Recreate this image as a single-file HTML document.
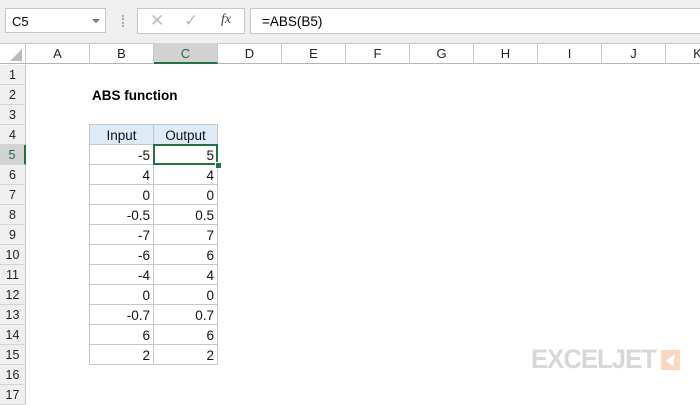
<!DOCTYPE html><html><head><style>
body{margin:0;width:700px;height:400px;overflow:hidden;background:#fff;font-family:"Liberation Sans",sans-serif;position:relative}
.a{position:absolute}
.ch{position:absolute;top:43px;height:21px;border-right:1px solid #c8c8c8;box-sizing:border-box;text-align:center;font-size:13px;line-height:21px;color:#222}
.rh{position:absolute;left:0;width:26px;height:20px;border-bottom:1px solid #d4d4d4;box-sizing:border-box;text-align:center;font-size:12.5px;line-height:20px;color:#222;background:#efefef;border-right:1px solid #c8c8c8}
.c{position:absolute;height:20px;width:64px;box-sizing:border-box;border-right:1px solid #c6c6c6;border-bottom:1px solid #c6c6c6;font-size:13.5px;line-height:21px;text-align:right;padding-right:3px;color:#111}
</style></head><body>
<div class="a" style="left:0;top:0;width:700px;height:43px;background:#efefef;border-bottom:1px solid #c8c8c8"></div>
<div class="a" style="left:5px;top:8px;width:101px;height:25px;background:#fff;border:1px solid #c6c6c6;font-size:13px;line-height:25px;padding-left:6px;box-sizing:border-box">C5</div>
<div class="a" style="left:92px;top:19px;width:0;height:0;border-left:4px solid transparent;border-right:4px solid transparent;border-top:4px solid #777"></div>
<div class="a" style="left:122px;top:15px;width:2px;height:12px;border-left:2px dotted #aaa"></div>
<div class="a" style="left:137px;top:8px;width:108px;height:26px;background:#fff;border:1px solid #c6c6c6;box-sizing:border-box"></div>
<div class="a" style="left:150px;top:11px;font-size:17px;color:#bbb">✕</div>
<div class="a" style="left:184px;top:11px;font-size:17px;color:#bbb">✓</div>
<div class="a" style="left:221px;top:12px;font-size:14px;font-style:italic;font-family:'Liberation Serif',serif;color:#444">fx</div>
<div class="a" style="left:250px;top:8px;width:450px;height:26px;background:#fff;border:1px solid #c6c6c6;border-right:none;box-sizing:border-box;font-size:13.5px;line-height:25px;padding-left:11px">=ABS(B5)</div>
<div class="a" style="left:0;top:43px;width:26px;height:21px;border-right:1px solid #c8c8c8;box-sizing:border-box"></div>
<div class="a" style="left:10px;top:49px;width:0;height:0;border-left:12px solid transparent;border-bottom:12px solid #bbb"></div>
<div class="a" style="left:0;top:63px;width:700px;height:1px;background:#b5b5b5"></div>
<div class="ch" style="left:26px;width:64px">A</div><div class="ch" style="left:90px;width:64px">B</div>
<div class="ch" style="left:154px;width:64px;background:#d3d3d3;border-bottom:2px solid #217346;color:#1e6b3e">C</div>
<div class="ch" style="left:218px;width:64px">D</div><div class="ch" style="left:282px;width:64px">E</div><div class="ch" style="left:346px;width:64px">F</div><div class="ch" style="left:410px;width:64px">G</div><div class="ch" style="left:474px;width:64px">H</div><div class="ch" style="left:538px;width:64px">I</div><div class="ch" style="left:602px;width:64px">J</div><div class="ch" style="left:666px;width:64px">K</div>
<div class="rh" style="top:65px">1</div><div class="rh" style="top:85px">2</div><div class="rh" style="top:105px">3</div><div class="rh" style="top:125px">4</div>
<div class="rh" style="top:145px;background:#d3d3d3;color:#1e6b3e;border-right:2px solid #217346">5</div>
<div class="rh" style="top:165px">6</div><div class="rh" style="top:185px">7</div><div class="rh" style="top:205px">8</div><div class="rh" style="top:225px">9</div><div class="rh" style="top:245px">10</div><div class="rh" style="top:265px">11</div><div class="rh" style="top:285px">12</div><div class="rh" style="top:305px">13</div><div class="rh" style="top:325px">14</div><div class="rh" style="top:345px">15</div><div class="rh" style="top:365px">16</div><div class="rh" style="top:385px">17</div>
<div class="a" style="left:92px;top:86px;font-size:13.5px;font-weight:bold;line-height:20px">ABS function</div>
<div class="a" style="left:89px;top:124px;width:1px;height:241px;background:#c6c6c6"></div>
<div class="a" style="left:89px;top:124px;width:129px;height:1px;background:#c6c6c6"></div>
<div class="c" style="left:90px;top:125px;background:#ddebf7;text-align:center;padding:0">Input</div>
<div class="c" style="left:154px;top:125px;background:#ddebf7;text-align:center;padding:0">Output</div>
<div class="c" style="left:90px;top:145px">-5</div><div class="c" style="left:154px;top:145px">5</div>
<div class="c" style="left:90px;top:165px">4</div><div class="c" style="left:154px;top:165px">4</div>
<div class="c" style="left:90px;top:185px">0</div><div class="c" style="left:154px;top:185px">0</div>
<div class="c" style="left:90px;top:205px">-0.5</div><div class="c" style="left:154px;top:205px">0.5</div>
<div class="c" style="left:90px;top:225px">-7</div><div class="c" style="left:154px;top:225px">7</div>
<div class="c" style="left:90px;top:245px">-6</div><div class="c" style="left:154px;top:245px">6</div>
<div class="c" style="left:90px;top:265px">-4</div><div class="c" style="left:154px;top:265px">4</div>
<div class="c" style="left:90px;top:285px">0</div><div class="c" style="left:154px;top:285px">0</div>
<div class="c" style="left:90px;top:305px">-0.7</div><div class="c" style="left:154px;top:305px">0.7</div>
<div class="c" style="left:90px;top:325px">6</div><div class="c" style="left:154px;top:325px">6</div>
<div class="c" style="left:90px;top:345px">2</div><div class="c" style="left:154px;top:345px">2</div>
<div class="a" style="left:153px;top:144px;width:65px;height:21px;border:2px solid #217346;box-sizing:border-box"></div>
<div class="a" style="left:215px;top:162px;width:5px;height:5px;background:#217346;border:1px solid #fff"></div>
<div class="a" style="left:531px;top:344px;font-size:27px;font-weight:bold;color:#d8d8d8;letter-spacing:-1px;transform:scaleX(0.95);transform-origin:left">EXCELJET</div>
<div class="a" style="left:661px;top:350px;width:19px;height:20px;background:#f9d9c2"></div>
<svg class="a" style="left:661px;top:350px" width="19" height="20"><path d="M14 4 L5 11 L12 16 Z" fill="#fff"/></svg>
</body></html>
